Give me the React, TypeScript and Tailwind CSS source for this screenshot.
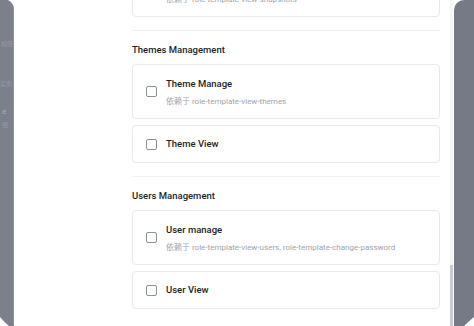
import React from "react";

const font = { fontFamily: "Roboto, 'Noto Sans CJK SC', sans-serif" };

function Box() {
  return <div className="w-[11px] h-[11px] shrink-0 rounded-[2px] border border-[#8c8f96] bg-white" />;
}

function Card({ title, dep, tall }: { title: string; dep?: string; tall?: boolean }) {
  return (
    <div
      className={`flex items-center rounded-[4px] border border-[#e8e9ec] bg-white pl-[13px] ${
        tall ? "h-[55px]" : "h-[38px]"
      }`}
    >
      <Box />
      <div className={`ml-[9px] flex flex-col ${tall ? "pt-[2px]" : ""}`}>
        {title && <div className="text-[9.5px] leading-[14px] font-medium text-[#1c1f24]">{title}</div>}
        {dep && <div className="mt-[5px] text-[8px] leading-[12px] text-[#9fa3ab] whitespace-nowrap">{dep}</div>}
      </div>
    </div>
  );
}

function Section({ heading, children }: { heading: string; children: React.ReactNode }) {
  return (
    <div className="flex flex-col">
      <div className="mt-[13px] h-px bg-[#f0f1f3]" />
      <div className="mt-[12px] text-[9.5px] leading-[14px] font-medium text-[#1c1f24]">{heading}</div>
      <div className="mt-[7px] flex flex-col gap-[6px]">{children}</div>
    </div>
  );
}

export default function App() {
  return (
    <div className="relative flex w-[474px] h-[326px] overflow-hidden bg-white" style={font}>
      {/* left dimmed sidebar */}
      <div className="relative w-[14px] shrink-0 bg-[#7c808b] border-r border-[#8e929c] overflow-hidden">
        <div className="absolute left-[1px] top-[39px] text-[6px] leading-[10px] text-[#979aa3] whitespace-nowrap">权限</div>
        <div className="absolute left-[0px] top-[79px] text-[6px] leading-[10px] text-[#979aa3] whitespace-nowrap">实例</div>
        <div className="absolute left-[2px] top-[107px] text-[8px] leading-[10px] font-semibold text-[#a3a6ae]">e</div>
        <div className="absolute left-[2px] top-[120px] text-[6px] leading-[10px] text-[#979aa3] whitespace-nowrap">细</div>
      </div>

      {/* modal body */}
      <div className="relative flex-1 overflow-hidden pl-[118px] pr-[14px]">
        <div className="flex flex-col mt-[-38px]">
          <Card title="Snapshots Manage" dep="依赖于 role-template-view-snapshots" tall />
          <Section heading="Themes Management">
            <Card title="Theme Manage" dep="依赖于 role-template-view-themes" tall />
            <Card title="Theme View" />
          </Section>
          <Section heading="Users Management">
            <Card title="User manage" dep="依赖于 role-template-view-users, role-template-change-password" tall />
            <Card title="User View" />
          </Section>
        </div>
        {/* scrollbar */}
        <div className="absolute right-[1px] top-0 bottom-0 w-[3px] bg-[#f6f6f7]" />
        <div className="absolute right-[1px] top-[265px] bottom-0 w-[3px] bg-[#c9cacd]" />
      </div>

      {/* right dimmed area */}
      <div className="w-[20px] shrink-0 bg-[#767a87] rounded-tl-[10px]" />

      {/* window corners */}
      <svg className="absolute left-0 top-0" width="14" height="8" viewBox="0 0 14 8">
        <path d="M8 0 L14 0 L14 7 Q12 2 8 0 Z" fill="#ffffff" />
      </svg>
      <svg className="absolute left-0 bottom-0" width="10" height="10" viewBox="0 0 10 10">
        <path d="M0 1 Q4 6 9 10 L0 10 Z" fill="#ffffff" />
      </svg>
      <svg className="absolute right-0 bottom-0" width="12" height="12" viewBox="0 0 12 12">
        <path d="M12 3 Q6 8 2 12 L12 12 Z" fill="#ffffff" />
      </svg>
    </div>
  );
}
